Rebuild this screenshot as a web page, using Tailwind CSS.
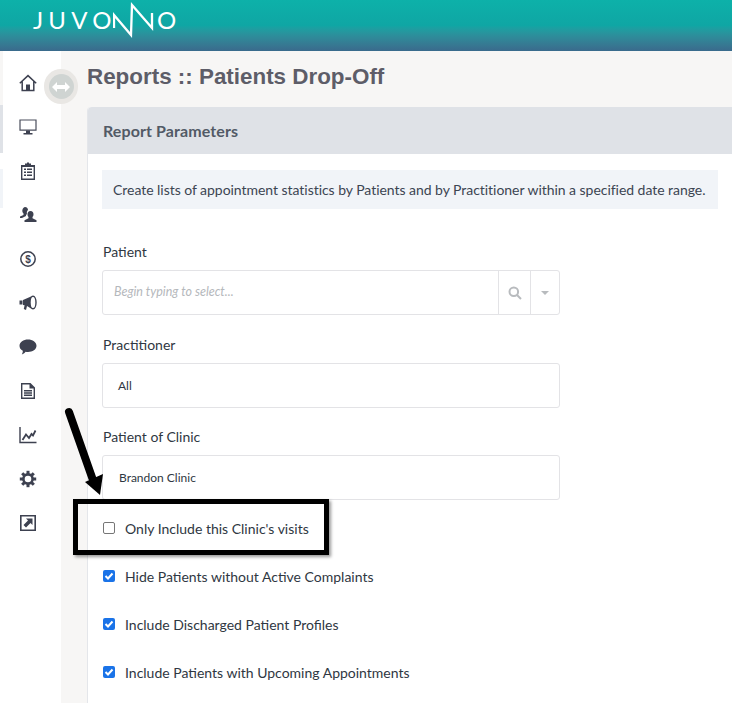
<!DOCTYPE html>
<html lang="en">
<head>
  <meta charset="UTF-8" />
  <title>Reports :: Patients Drop-Off</title>
  <script src="https://cdn.jsdelivr.net/npm/@tailwindcss/browser@4"></script>
</head>
<body class="relative h-[703px] w-[732px] overflow-hidden bg-white font-['Lato',sans-serif] text-[#2f3742]">

  <!-- Top bar -->
  <header class="flex h-[51px] items-start bg-gradient-to-b from-[#0db1a9] via-[#0fa6a4] to-[#3a6a8c] pl-[33px]">
    <div class="flex items-start text-white">
      <span class="w-[80px] text-[24px] leading-[40px] font-normal tracking-[5.2px]">JUVO</span>
      <svg width="42" height="36" viewBox="0 0 42 36" fill="none" stroke="white" stroke-width="2.3" class="mt-[2px]">
        <path d="M1 26 V13 L18 33 L19 3 L39 26 V11" />
      </svg>
      <span class="ml-[2px] text-[24px] leading-[40px] font-normal">O</span>
    </div>
  </header>

  <div class="flex h-[652px]">
    <!-- Left nav -->
    <nav class="flex w-[61px] shrink-0 bg-white">
      <!-- sliver of the page behind the nav -->
      <div class="flex w-[3px] shrink-0 flex-col">
        <div class="h-[54px] bg-[#f7f6f5]"></div>
        <div class="h-[48px] bg-[#dfe2e7]"></div>
        <div class="h-[16px] bg-white"></div>
        <div class="h-[39px] bg-[#f1f4f8]"></div>
      </div>
      <div class="flex flex-1 flex-col items-center gap-[26px] pt-[23px] pr-[8px]">
        <svg class="h-[18px] w-[18px]" viewBox="0 0 18 18"><path fill="none" stroke="#3d4150" stroke-width="1.5" d="M0.8 9.2 L9 1.6 L17.2 9.2 M3.2 7.6 V16.5 H14.8 V7.6"/><path fill="#3d4150" d="M7 10.5 H11 V16.5 H7 Z"/></svg>
        <svg class="h-[18px] w-[18px]" viewBox="0 0 18 18"><path fill="none" stroke="#4a4e5c" stroke-width="1.2" d="M1 2 H17 V12.2 H1 Z"/><path fill="#3d4150" d="M7 12.5 H11 V15 H13.5 V16.6 H4.5 V15 H7 Z"/></svg>
        <svg class="h-[18px] w-[18px]" viewBox="0 0 18 18"><path fill="#3d4150" fill-rule="evenodd" d="M2 3 H6 V1.5 H8 V0.5 H10 V1.5 H12 V3 H16 V18 H2 Z M3.4 5 V16.6 H14.6 V5 Z M5 6.5 H7 V8 H5 Z M8 6.5 H13 V8 H8 Z M5 9.5 H7 V11 H5 Z M8 9.5 H13 V11 H8 Z M5 12.5 H7 V14 H5 Z M8 12.5 H13 V14 H8 Z"/></svg>
        <svg class="h-[18px] w-[18px]" viewBox="0 0 18 18"><path fill="#3d4150" d="M6 1 C8 1 9 2.5 9 4 C8 5 7.5 6.5 8 8 L7 9 V10 L3 12 H1 V10.5 L4.5 9 V7.5 C3.5 6.5 3 5 3.5 3.5 C4 2 5 1 6 1 Z M11.5 5 C13.5 5 14.5 6.5 14.5 8.2 C14.5 9.5 14 10.5 13.5 11 V12.2 L17.5 14.2 V16 H5.5 V14.2 L9.5 12.2 V11 C9 10.5 8.5 9.5 8.5 8.2 C8.5 6.5 9.5 5 11.5 5 Z"/></svg>
        <svg class="h-[18px] w-[18px]" viewBox="0 0 18 18"><circle cx="9" cy="9" r="7.2" fill="none" stroke="#3d4150" stroke-width="1.5"/><text x="9" y="12.6" text-anchor="middle" font-size="10" font-weight="700" fill="#3d4150" font-family="Liberation Sans">$</text></svg>
        <svg class="h-[18px] w-[18px]" viewBox="0 0 18 18"><path fill="#3d4150" d="M0.5 6.5 H3.5 V10.5 H0.5 Z M4 6 L12 2.5 V14.5 L8 12 L7 16 L4.8 15 L5.6 11.2 L4 11 Z"/><ellipse cx="14" cy="8.5" rx="3" ry="6.3" fill="white" stroke="#3d4150" stroke-width="1.4"/></svg>
        <svg class="h-[18px] w-[18px]" viewBox="0 0 18 18"><path fill="#3d4150" d="M9 1.5 C13.5 1.5 17.5 4 17.5 7.8 C17.5 11.6 13.5 14 9 14 C8 14 7.4 14 6.6 13.8 C5.6 15.4 4.2 16.2 2.8 16.4 C3.6 15.2 3.9 13.8 3.8 12.8 C1.6 11.6 0.5 10 0.5 7.8 C0.5 4 4.5 1.5 9 1.5 Z"/></svg>
        <svg class="h-[18px] w-[18px]" viewBox="0 0 18 18"><path fill="#3d4150" fill-rule="evenodd" d="M2 1 H11.5 L16 5.5 V17 H2 Z M3.4 2.4 V15.6 H14.6 V6.5 H10.5 V2.4 Z M5 8 H13 V9.4 H5 Z M5 10.3 H13 V11.7 H5 Z M5 12.6 H13 V14 H5 Z"/></svg>
        <svg class="h-[18px] w-[18px]" viewBox="0 0 18 18"><path fill="none" stroke="#3d4150" stroke-width="1.4" d="M1 1 V16.5 H17.5"/><path fill="none" stroke="#3d4150" stroke-width="1.8" d="M3.5 14 L7 8.5 L10 12 L12.5 8 L14 9.5 L16.5 4.5"/></svg>
        <svg class="h-[18px] w-[18px]" viewBox="0 0 18 18"><circle cx="9" cy="9" r="4.6" fill="none" stroke="#3d4150" stroke-width="2.6"/><g stroke="#3d4150" stroke-width="3"><path d="M9 0.8 V4"/><path d="M9 14 V17.2"/><path d="M0.8 9 H4"/><path d="M14 9 H17.2"/><path d="M3.2 3.2 L5.4 5.4"/><path d="M12.6 12.6 L14.8 14.8"/><path d="M3.2 14.8 L5.4 12.6"/><path d="M12.6 5.4 L14.8 3.2"/></g></svg>
        <svg class="h-[18px] w-[18px]" viewBox="0 0 18 18"><path fill="#3d4150" fill-rule="evenodd" d="M1 1 H17 V17 H1 Z M2.6 2.6 V15.4 H15.4 V2.6 Z"/><path fill="#3d4150" d="M7 4.5 H13.5 V11 L11.5 9 L7 13.5 L4.5 11 L9 6.5 Z"/></svg>
      </div>
    </nav>

    <!-- Main -->
    <main class="min-w-0 flex-1 bg-[#f7f6f5]">
      <h1 class="pt-[13px] pl-[26px] font-['Liberation_Sans',sans-serif] text-[22.4px] leading-[26px] font-bold text-[#5d5d68]">Reports :: Patients Drop-Off</h1>

      <section class="mt-[17px] ml-[26px] h-[600px] rounded-tl-[4px] border-l border-[#e4e6ea] bg-white">
        <div class="flex h-[47px] items-center rounded-tl-[4px] bg-[#dfe2e7] pl-[15px] text-[16px] font-bold tracking-[0.1px] text-[#525a66]">Report Parameters</div>

        <div class="px-[14px]">
          <p class="mt-[16px] flex h-[39px] items-center bg-[#f1f4f8] pl-[11px] text-[14px] tracking-[-0.04px] whitespace-nowrap text-[#3c4552]">Create lists of appointment statistics by Patients and by Practitioner within a specified date range.</p>

          <label class="mt-[34px] ml-[1px] block text-[14px] leading-[18px]">Patient</label>
          <div class="mt-[9px] flex h-[45px] w-[458px] rounded-[3px] border border-[#e3e3e6]">
            <span class="flex flex-1 items-center pl-[11px] text-[12.5px] text-[#b5b8bc] italic">Begin typing to select...</span>
            <span class="flex w-[32px] items-center justify-center border-l border-[#e3e3e6]">
              <svg width="14" height="14" viewBox="0 0 14 14" fill="none" stroke="#b8bbbe" stroke-width="2"><circle cx="5.8" cy="5.8" r="4.3"/><path d="M9 9 L13 13"/></svg>
            </span>
            <span class="flex w-[29px] items-center justify-center border-l border-[#e3e3e6]">
              <span class="h-0 w-0 border-x-[4px] border-t-[4px] border-x-transparent border-t-[#b8bbbe]"></span>
            </span>
          </div>

          <label class="mt-[21px] ml-[1px] block text-[14px] leading-[18px]">Practitioner</label>
          <div class="mt-[9px] flex h-[45px] w-[458px] items-center rounded-[3px] border border-[#e3e3e6] pl-[15px] text-[12px]">All</div>

          <label class="mt-[20px] ml-[1px] block text-[14px] leading-[18px]">Patient of Clinic</label>
          <div class="mt-[9px] flex h-[45px] w-[458px] items-center rounded-[3px] border border-[#e3e3e6] pl-[16px] text-[12px]">Brandon Clinic</div>

          <div class="mt-[20px] ml-[1px] flex flex-col gap-[30px] text-[14px] leading-[18px]">
            <div class="flex items-center gap-[10px]">
              <span class="mb-[2px] h-[12px] w-[12px] rounded-[2px] border border-[#767676] bg-white"></span>
              <span>Only Include this Clinic's visits</span>
            </div>
            <div class="flex items-center gap-[10px]">
              <span class="mb-[2px] flex h-[12px] w-[12px] items-center justify-center rounded-[2px] bg-[#1a73e8]"><svg width="10" height="10" viewBox="0 0 10 10" fill="none" stroke="white" stroke-width="2"><path d="M1.5 5 L4 7.5 L8.5 2.5"/></svg></span>
              <span>Hide Patients without Active Complaints</span>
            </div>
            <div class="flex items-center gap-[10px]">
              <span class="mb-[2px] flex h-[12px] w-[12px] items-center justify-center rounded-[2px] bg-[#1a73e8]"><svg width="10" height="10" viewBox="0 0 10 10" fill="none" stroke="white" stroke-width="2"><path d="M1.5 5 L4 7.5 L8.5 2.5"/></svg></span>
              <span>Include Discharged Patient Profiles</span>
            </div>
            <div class="flex items-center gap-[10px]">
              <span class="mb-[2px] flex h-[12px] w-[12px] items-center justify-center rounded-[2px] bg-[#1a73e8]"><svg width="10" height="10" viewBox="0 0 10 10" fill="none" stroke="white" stroke-width="2"><path d="M1.5 5 L4 7.5 L8.5 2.5"/></svg></span>
              <span>Include Patients with Upcoming Appointments</span>
            </div>
          </div>
        </div>
      </section>
    </main>
  </div>

  <!-- Collapse toggle sits over the nav edge -->
  <div class="absolute top-[69px] left-[44px] flex h-[35px] w-[34px] items-center justify-center rounded-full bg-[#e9e7e4]">
    <div class="flex h-[25px] w-[25px] items-center justify-center rounded-full bg-[#cfd4d2]">
      <svg width="18" height="10" viewBox="0 0 18 10" fill="white"><path d="M0 5 L5 0 V3 H13 V0 L18 5 L13 10 V7 H5 V10 Z"/></svg>
    </div>
  </div>

  <!-- Annotation: arrow and box drawn over the screenshot -->
  <svg class="absolute top-[405px] left-[60px]" width="50" height="95" viewBox="0 0 50 95" fill="none">
    <path d="M9 7 L34 78" stroke="black" stroke-width="8" stroke-linecap="round"/>
    <path d="M25 77 L43 69 L40 90 Z" fill="black"/>
  </svg>
  <div class="absolute top-[499px] left-[73px] h-[56px] w-[256px] border-[5px] border-black shadow-[2px_2px_3px_rgba(0,0,0,0.4)]"></div>
</body>
</html>
